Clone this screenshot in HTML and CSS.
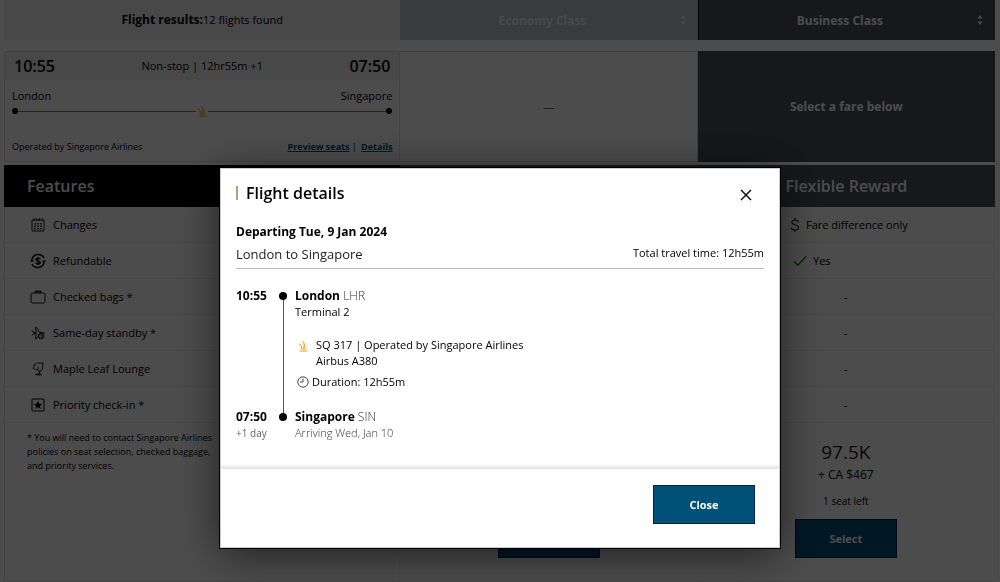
FILE: index.html
```html
<!DOCTYPE html>
<html lang="en">
<head>
    <meta charset="UTF-8">
    <meta name="viewport" content="width=device-width, initial-scale=1.0">
    <title>Flight results</title>
    <link rel="stylesheet" href="styles.css">
</head>
<body>
    <!-- shared icons -->
    <svg class="sprite" width="0" height="0">
        <symbol id="bird" viewBox="0 0 12 14">
            <path d="M4.5 0.5C8 4.5 7.5 8.5 4.5 12.5C10 9.5 9.5 3.5 4.5 0.5Z" fill="#f5a81c" stroke="#f5a81c" stroke-width="0.4"/>
            <path d="M1 4C4.2 6.5 4.5 9 3 12C6.3 9.5 5 5.5 1 4Z" fill="#f5a81c" stroke="#f5a81c" stroke-width="0.4"/>
            <path d="M9 7.5C9.5 9.5 8.5 11 6 12.5C9 12.3 11 10.5 9 7.5Z" fill="#f5a81c"/>
            <path d="M2 13.2H10.5L11.5 11.5" fill="none" stroke="#f5a81c" stroke-width="0.9"/>
        </symbol>
        <symbol id="sort" viewBox="0 0 6 12">
            <path d="M3 1L5.5 4.5H0.5ZM3 11L0.5 7.5H5.5Z" fill="currentColor"/>
        </symbol>
    </svg>

    <main class="page">
        <div class="results-header">
            <div class="results-count"><strong>Flight results:</strong>12 flights found</div>
            <button class="cabin economy">Economy Class <svg class="sort"><use href="#sort"/></svg></button>
            <button class="cabin business">Business Class <svg class="sort"><use href="#sort"/></svg></button>
        </div>

        <div class="flight-row">
            <div class="flight">
                <div class="flight-times">
                    <span class="time">10:55</span>
                    <span>Non-stop | 12hr55m +1</span>
                    <span class="time">07:50</span>
                </div>
                <div class="flight-cities">
                    <span>London</span>
                    <span>Singapore</span>
                </div>
                <div class="flight-line">
                    <i class="dot"></i><i class="line"></i>
                    <svg class="bird"><use href="#bird"/></svg>
                    <i class="line"></i><i class="dot"></i>
                </div>
                <div class="flight-links">
                    <span>Operated by Singapore Airlines</span>
                    <span><a href="#">Preview seats</a> | <a href="#">Details</a></span>
                </div>
            </div>
            <div class="fare-empty">—</div>
            <div class="fare-selected">Select a fare below</div>
        </div>

        <table class="fares">
            <thead>
                <tr>
                    <th class="features-title">Features</th>
                    <th></th>
                    <th>Flexible Reward</th>
                </tr>
            </thead>
            <tbody>
                <tr>
                    <td><div class="feature">
                        <svg class="icon" viewBox="0 0 16 16"><path d="M2 3H14V14H2ZM4 1V4M6.7 1V4M9.3 1V4M12 1V4" fill="none" stroke="#222"/><path d="M5 6V13M8 6V13M11 6V13" stroke="#000" stroke-width="1.4" stroke-dasharray="1.5 1"/></svg>
                        Changes
                    </div></td>
                    <td></td>
                    <td><div class="value fee">
                        <svg class="dollar" viewBox="0 0 10 14"><path d="M8.3 4C8 2.8 6.8 2 5 2C3 2 1.8 2.9 1.8 4.3C1.8 7.4 8.5 6 8.5 9.5C8.5 11 7 12 5 12C3 12 1.6 11 1.4 9.6M5 0V2M5 12V14" fill="none" stroke="#222" stroke-width="1.2"/></svg>
                        Fare difference only
                    </div></td>
                </tr>
                <tr>
                    <td><div class="feature">
                        <svg class="icon" viewBox="0 0 16 16"><path d="M2 6A6.5 6.5 0 0 1 14 5M14 10A6.5 6.5 0 0 1 2 11" fill="none" stroke="#000" stroke-width="1.5"/><path d="M0 8.5L2 5.5L4 8.5ZM12 7.5L14 10.5L16 7.5Z"/><path d="M10.3 6C9.8 4.8 6 4.5 6 6.5C6 8.4 10.3 7.4 10.3 9.5C10.3 11.5 6.2 11.3 5.7 9.8M8 4V12" fill="none" stroke="#000" stroke-width="1.3"/></svg>
                        Refundable
                    </div></td>
                    <td></td>
                    <td><div class="value included">
                        <svg class="check" viewBox="0 0 14 12"><path d="M1 6.5L4.8 10.3L13 1.5" fill="none" stroke="#008a00" stroke-width="1.3"/></svg>
                        Yes
                    </div></td>
                </tr>
                <tr>
                    <td><div class="feature">
                        <svg class="icon" viewBox="0 0 16 16"><rect x="1" y="4" width="14" height="10" rx="1.5" fill="none" stroke="#111"/><path d="M5.5 4V2.5H10.5V4" fill="none" stroke="#000" stroke-width="1.3"/></svg>
                        Checked bags *
                    </div></td>
                    <td></td>
                    <td><div class="value">-</div></td>
                </tr>
                <tr>
                    <td><div class="feature">
                        <svg class="icon" viewBox="0 0 16 16"><path d="M2 5.5L3.2 7.3H6.2L5.4 2.5H6.6L9.3 7.3H13C14.6 7.3 14.6 8.4 13.8 8.6M2 10.5L3.2 8.7H6.2L5.4 13.5H6.6L7.8 11.4" fill="none" stroke="#000" stroke-width="0.9"/><circle cx="11" cy="11" r="2.5" fill="none" stroke="#000" stroke-width="1.2"/><path d="M11 9.6V11.2H12.2" fill="none" stroke="#000" stroke-width="0.8"/></svg>
                        Same-day standby *
                    </div></td>
                    <td></td>
                    <td><div class="value">-</div></td>
                </tr>
                <tr>
                    <td><div class="feature">
                        <svg class="icon" viewBox="0 0 16 16"><path d="M7.5 2H13L12.5 7.5C12.2 9 11.3 10 10 10.2C8.8 10.2 7.8 9.8 7.3 9M10 10.3L8.8 13.5" fill="none" stroke="#111"/><path d="M5.5 13.5H11.5" stroke="#000" stroke-width="1.5"/><path d="M6.2 1.5L5.3 3.8L3.5 4.2L4.5 5.5L2.8 7.2L5.5 8.7L8 8.2L8.2 5.5" fill="none" stroke="#000" stroke-width="0.8"/></svg>
                        Maple Leaf Lounge
                    </div></td>
                    <td></td>
                    <td><div class="value">-</div></td>
                </tr>
                <tr>
                    <td><div class="feature">
                        <svg class="icon" viewBox="0 0 16 16"><rect x="2" y="2" width="12" height="12" rx="1" fill="none" stroke="#000"/><path d="M8 3.8L9.2 6.7L12.3 6.9L9.9 8.9L10.7 12L8 10.3L5.3 12L6.1 8.9L3.7 6.9L6.8 6.7Z"/></svg>
                        Priority check-in *
                    </div></td>
                    <td></td>
                    <td><div class="value">-</div></td>
                </tr>
                <tr class="prices">
                    <td><p class="footnote">* You will need to contact Singapore Airlines<br>policies on seat selection, checked baggage,<br>and priority services.</p></td>
                    <td class="price"><button class="btn">Select</button></td>
                    <td class="price">
                        <div class="points">97.5K</div>
                        <div class="cash">+ CA $467</div>
                        <div class="seats">1 seat left</div>
                        <button class="btn">Select</button>
                    </td>
                </tr>
            </tbody>
        </table>
    </main>

    <div class="overlay">
        <div class="modal" role="dialog" aria-labelledby="modal-title">
            <div class="modal-body">
                <div class="modal-top">
                    <h1 id="modal-title">Flight details</h1>
                    <button class="close-x" aria-label="Close dialog">
                        <svg width="12" height="12" viewBox="0 0 12 12"><path d="M1 1L11 11M11 1L1 11" stroke="#000" stroke-width="1.4"/></svg>
                    </button>
                </div>
                <div class="trip">
                    <div>
                        <h2>Departing Tue, 9 Jan 2024</h2>
                        <p class="route">London to Singapore</p>
                    </div>
                    <p class="total">Total travel time: 12h55m</p>
                </div>
                <div class="timeline">
                    <div class="when"><strong>10:55</strong></div>
                    <div class="track start"><i class="dot"></i></div>
                    <div class="leg">
                        <div class="place"><strong>London</strong> LHR</div>
                        <div class="terminal">Terminal 2</div>
                        <div class="carrier">
                            <svg class="bird"><use href="#bird"/></svg>
                            <div>SQ 317 | Operated by Singapore Airlines<br>Airbus A380</div>
                        </div>
                        <div class="duration">
                            <svg width="12" height="12" viewBox="0 0 12 12"><circle cx="6" cy="6" r="5.2" fill="none" stroke="#333" stroke-width="0.9"/><path d="M6 2.5V6H3" fill="none" stroke="#333" stroke-width="0.9"/></svg>
                            Duration: 12h55m
                        </div>
                    </div>
                    <div class="when"><strong>07:50</strong><small>+1 day</small></div>
                    <div class="track"><i class="dot"></i></div>
                    <div>
                        <div class="place"><strong>Singapore</strong> SIN</div>
                        <div class="arriving">Arriving Wed, Jan 10</div>
                    </div>
                </div>
            </div>
            <div class="modal-footer">
                <button class="btn">Close</button>
            </div>
        </div>
    </div>
</body>
</html>
```
FILE: styles.css
```css
* {
    box-sizing: border-box;
    margin: 0;
    padding: 0;
}
body {
    font-family: 'Open Sans', 'Noto Sans', sans-serif;
    font-size: 11px;
    line-height: 16px;
    color: #000;
    background-color: #fff;
    overflow: hidden;
}
button {
    font-family: inherit;
    border: none;
    cursor: pointer;
}
strong {
    font-weight: 700;
}
.sprite {
    display: block;
}
.page {
    padding: 0 5px 0 4px;
}
.results-header,
.flight-row {
    display: grid;
    grid-template-columns: 4fr 3fr 3fr;
}

/* results header */
.results-header {
    height: 40px;
    margin-bottom: 11px;
}
.results-count {
    display: flex;
    align-items: center;
    justify-content: center;
    background-color: #f0f0f0;
}
.results-count strong {
    font-size: 12px;
}
.cabin {
    display: flex;
    align-items: center;
    padding-right: 12px;
    color: #fff;
    font-size: 12px;
    font-weight: 700;
    justify-content: center;
    border-left: 1px solid #000;
}
.economy {
    background-color: #c3c6c9;
    color: #f4f4f4;
    border-left-color: #c3c6c9;
}
.business {
    background-color: #4d5055;
}
.sort {
    width: 6px;
    height: 12px;
    margin-left: auto;
}
.cabin::before {
    content: "";
    width: 4px;
    margin-right: auto;
}

/* selected flight */
.flight-row {
    height: 111px;
    margin-bottom: 3px;
}
.flight,
.fare-empty {
    border: 1px solid #ddd;
}
.fare-empty {
    border-left: none;
    color: #666;
}
.flight {
    display: flex;
    flex-direction: column;
}
.flight-times,
.flight-cities,
.flight-links {
    display: flex;
    align-items: center;
    justify-content: space-between;
    padding: 0 7px;
}
.flight-times {
    height: 28px;
    padding: 0 9px;
    background-color: #f0f0f0;
}
.time {
    font-size: 16px;
    font-weight: 600;
}
.flight-cities {
    padding-top: 8px;
}
.flight-line {
    display: flex;
    align-items: center;
    height: 14px;
    padding: 0 7px;
}
.dot {
    width: 6px;
    height: 6px;
    border-radius: 50%;
    background-color: #000;
}
.line {
    flex: 1;
    height: 1px;
    background-color: #777;
}
.bird {
    width: 12px;
    height: 12px;
}
.flight-links {
    margin-top: auto;
    padding-bottom: 6px;
    font-size: 9px;
}
.flight-links a {
    color: #005078;
    font-weight: 700;
}
.flight-links a + a {
    margin-left: 2px;
}
.fare-empty,
.fare-selected {
    display: flex;
    align-items: center;
    justify-content: center;
}
.fare-selected {
    background-color: #4d5055;
    color: #fff;
    font-size: 12px;
    font-weight: 700;
}

/* fares table */
.fares {
    width: 100%;
    table-layout: fixed;
    border-collapse: separate;
    border-spacing: 0;
}
.fares th {
    width: 30%;
    height: 42px;
    background-color: #4d5055;
    color: #fff;
    font-size: 16px;
    font-weight: 600;
}
.fares .features-title {
    width: 40%;
    padding-left: 23px;
    background-color: #000;
    text-align: left;
}
.fares td {
    height: 36px;
    border-right: 1px dotted #e2e2e2;
    border-bottom: 1px dotted #e2e2e2;
}
.fares td:first-child {
    border-left: 1px solid #e2e2e2;
}
.feature {
    display: flex;
    align-items: center;
    gap: 7px;
    padding-left: 25px;
}
.icon {
    width: 16px;
    height: 16px;
}
.value {
    display: flex;
    align-items: center;
    justify-content: center;
    gap: 6px;
}
.dollar {
    width: 10px;
    height: 14px;
}
.check {
    width: 14px;
    height: 12px;
}
.fee {
    padding-left: 6px;
}
.included {
    padding-right: 68px;
}
.prices td {
    height: 158px;
    vertical-align: top;
}
.footnote {
    padding: 8px 0 0 22px;
    font-size: 9px;
    line-height: 14px;
}
.fares .price {
    padding-bottom: 22px;
    text-align: center;
    vertical-align: bottom;
}
.points {
    color: #222;
    font-size: 19px;
    line-height: 26px;
}
.cash {
    font-size: 12px;
    line-height: 20px;
}
.seats {
    margin: 8px 0 10px;
    font-size: 10px;
}
.btn {
    width: 102px;
    height: 39px;
    background-color: #005078;
    border: 1px solid #00205b;
    color: #fff;
    font-size: 11px;
    font-weight: 700;
}

/* modal */
.overlay {
    position: fixed;
    inset: 0;
    padding: 168px 16px 0;
    background-color: rgba(0, 0, 0, 0.7);
}
.modal {
    max-width: 560px;
    margin: 0 auto;
    background-color: #fff;
    border: 1px solid #ccc;
    box-shadow: 0 0 0 1px #000, 0 6px 40px rgba(0, 0, 0, 0.6);
}
.modal-body {
    padding: 11px 15px 28px;
    background: linear-gradient(#fff, #e0e0e0) bottom / 100% 5px no-repeat;
}
.modal-top {
    display: flex;
    align-items: center;
    justify-content: space-between;
    height: 26px;
    margin-bottom: 18px;
}
.modal h1 {
    padding-left: 8px;
    border-left: 2px solid #b89b7c;
    font-size: 16px;
    font-weight: 600;
    line-height: 14px;
}
.close-x {
    padding: 10px 12px 6px;
    background: none;
    line-height: 0;
}
.trip {
    display: flex;
    align-items: flex-end;
    justify-content: space-between;
    padding-bottom: 6px;
    border-bottom: 1px solid #bbb;
}
.trip h2 {
    font-size: 12px;
    font-weight: 700;
    line-height: 16px;
}
.route {
    margin-top: 6px;
    color: #222;
    font-size: 13px;
}
.total {
    padding-bottom: 1px;
}
.timeline {
    display: grid;
    grid-template-columns: 43px 16px 1fr;
    margin-top: 19px;
}
.when {
    font-size: 12px;
}
.when small {
    display: block;
    color: #666;
    font-size: 10px;
}
.track {
    display: flex;
    flex-direction: column;
    padding-top: 4px;
}
.track .dot {
    width: 8px;
    height: 8px;
}
.track.start {
    margin-bottom: -4px;
}
.track.start::after {
    content: "";
    flex: 1;
    width: 1px;
    margin-left: 4px;
    background-color: #555;
}
.place {
    color: #333;
    font-size: 12px;
    font-weight: 300;
}
.place strong {
    color: #000;
}
.carrier {
    display: flex;
    gap: 7px;
    margin-top: 17px;
    padding-left: 2px;
}
.carrier .bird {
    margin-top: 3px;
}
.duration {
    display: flex;
    align-items: center;
    gap: 3px;
    margin: 5px 0 19px;
    padding-left: 2px;
}
.arriving {
    color: #333;
    font-weight: 300;
}
.modal-footer {
    display: flex;
    justify-content: flex-end;
    padding: 16px 24px 23px;
}
```
